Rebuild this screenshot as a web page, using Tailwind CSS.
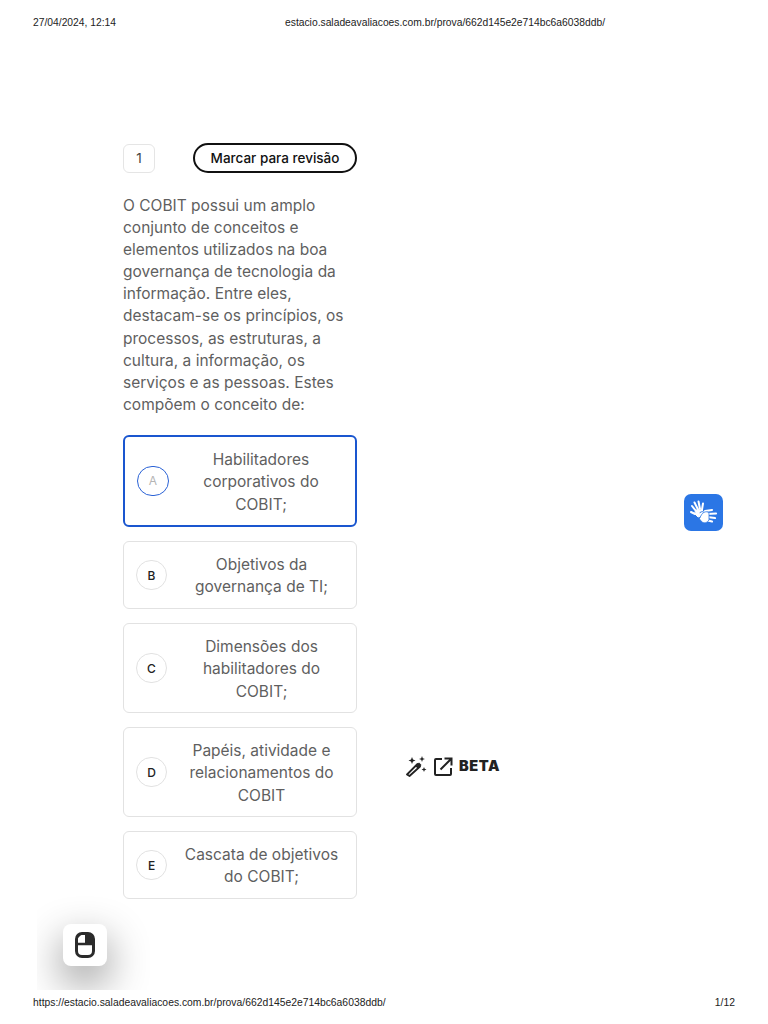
<!DOCTYPE html>
<html lang="en">
<head>
  <meta charset="UTF-8">
  <title>Prova</title>
  <script src="https://cdn.jsdelivr.net/npm/@tailwindcss/browser@4"></script>
</head>
<body class="bg-white">
  <div class="relative w-[768px] h-[1024px] overflow-hidden flex flex-col">
    <!-- print header -->
    <div class="flex pl-[33px] pt-[17px] h-[143px] text-[10.3px] leading-[12px] text-[#222] font-['Liberation_Sans',sans-serif]">
      <span class="w-[252px]">27/04/2024, 12:14</span>
      <span>estacio.saladeavaliacoes.com.br/prova/662d145e2e714bc6a6038ddb/</span>
    </div>

    <div class="ml-[123px] w-[234px] font-['Inter',sans-serif]">
      <div class="flex justify-between items-center h-[30px]">
        <div class="w-[32px] h-[29px] rounded-[6px] border border-[#e5e5e5] flex items-center justify-center text-[13.5px] text-[#444]">1</div>
        <div class="w-[164px] h-[30px] rounded-[15px] border-2 border-[#111] flex items-center justify-center text-[13.5px] font-medium text-[#111]">Marcar para revisão</div>
      </div>

      <p class="mt-[22px] text-[15.5px] leading-[22.1px] text-[#5f5f5f]">O COBIT possui um amplo conjunto de conceitos e elementos utilizados na boa governança de tecnologia da informação. Entre eles, destacam-se os princípios, os processos, as estruturas, a cultura, a informação, os serviços e as pessoas. Estes compõem o conceito de:</p>

      <div class="mt-[19px] flex flex-col gap-[14px]">
        <div class="h-[92px] rounded-[6px] border-2 border-[#1a56cf] flex items-center pl-[12px] pr-[2px]">
          <div class="w-[32px] h-[30px] shrink-0 rounded-full border border-[#2a62d6] flex items-center justify-center pt-[1px] text-[12px] text-[#b5b5b5]">A</div>
          <div class="flex-1 pt-[3px] text-center text-[15.5px] leading-[22.3px] text-[#5f5f5f]">Habilitadores<br>corporativos do<br>COBIT;</div>
        </div>
        <div class="h-[68px] rounded-[6px] border border-[#e2e2e2] flex items-center pl-[12px]">
          <div class="w-[31px] h-[30px] shrink-0 rounded-full border border-[#e2e2e2] flex items-center justify-center pt-[2px] text-[12px] font-medium text-[#222]">B</div>
          <div class="flex-1 pt-[2px] text-center text-[15.5px] leading-[22.3px] text-[#5f5f5f]">Objetivos da<br>governança de TI;</div>
        </div>
        <div class="h-[90px] rounded-[6px] border border-[#e2e2e2] flex items-center pl-[12px]">
          <div class="w-[31px] h-[30px] shrink-0 rounded-full border border-[#e2e2e2] flex items-center justify-center pt-[2px] text-[12px] font-medium text-[#222]">C</div>
          <div class="flex-1 pt-[3px] text-center text-[15.5px] leading-[22.3px] text-[#5f5f5f]">Dimensões dos<br>habilitadores do<br>COBIT;</div>
        </div>
        <div class="h-[90px] rounded-[6px] border border-[#e2e2e2] flex items-center pl-[12px]">
          <div class="w-[31px] h-[30px] shrink-0 rounded-full border border-[#e2e2e2] flex items-center justify-center pt-[2px] text-[12px] font-medium text-[#222]">D</div>
          <div class="flex-1 pt-[3px] text-center text-[15.5px] leading-[22.3px] text-[#5f5f5f]">Papéis, atividade e<br>relacionamentos do<br>COBIT</div>
        </div>
        <div class="h-[68px] rounded-[6px] border border-[#e2e2e2] flex items-center pl-[12px]">
          <div class="w-[31px] h-[30px] shrink-0 rounded-full border border-[#e2e2e2] flex items-center justify-center pt-[2px] text-[12px] font-medium text-[#222]">E</div>
          <div class="flex-1 pt-[3px] text-center text-[15.5px] leading-[22.3px] text-[#5f5f5f]">Cascata de objetivos<br>do COBIT;</div>
        </div>
      </div>
    </div>

    <!-- print footer -->
    <div class="absolute left-[33px] right-[33px] top-[997px] flex justify-between text-[10.35px] leading-[12px] text-[#222] font-['Liberation_Sans',sans-serif]">
      <span>https://estacio.saladeavaliacoes.com.br/prova/662d145e2e714bc6a6038ddb/</span>
      <span>1/12</span>
    </div>

    <!-- libras widget -->
    <div class="absolute left-[684px] top-[494px] w-[39px] h-[37px] rounded-[7px] bg-[#2b76e5] flex items-center justify-center">
      <svg width="30" height="27" viewBox="0 0 30 27" fill="none" stroke-linecap="round" stroke-linejoin="round">
        <path d="M3 7 L7 12 M5.5 3.5 L9 10.5 M9.5 2.5 L11 10 M14 4.5 L13 10.5 M2 13 L6 15" stroke="white" stroke-width="2"/>
        <path d="M7 11 H13 L15 13 L13 17 L9 18 L6 15 Z" fill="white" stroke="white"/>
        <path d="M11 13.5 C13 12 15 12.5 15.5 14" stroke="#2b76e5" stroke-width="1"/>
        <path d="M16 12 L23 11 M18 15 L27 14.5 M18 18 L26 19 M17 21 L23 22.5" stroke="white" stroke-width="2.2"/>
        <path d="M13 15 C15 12 20 12 20 15 V21 C18 24 15 24.5 13 23 L10.5 20 Z" fill="white" stroke="#2b76e5" stroke-width="0.8"/>
      </svg>
    </div>

    <!-- beta tools -->
    <div class="absolute left-[405px] top-[756px] h-[21px] flex items-center gap-[7px]">
      <svg width="22" height="21" viewBox="0 0 22 21" fill="none" stroke="#222">
        <path d="M2 18.5 L12.5 8 L15 10.5 L4.5 20 Z" stroke-width="1.8" stroke-linejoin="round"/>
        <path d="M11 9.5 L13.5 12" stroke-width="1.8"/>
        <path d="M11.5 9 L14 6.5 L16.5 9 L14 11.5 Z" fill="#222" stroke="none"/>
        <path d="M7 1 L8 3.5 L10.5 4.5 L8 5.5 L7 8 L6 5.5 L3.5 4.5 L6 3.5 Z M17 0 L17.8 2.2 L20 3 L17.8 3.8 L17 6 L16.2 3.8 L14 3 L16.2 2.2 Z M19 11 L19.7 12.8 L21.5 13.5 L19.7 14.2 L19 16 L18.3 14.2 L16.5 13.5 L18.3 12.8 Z" fill="#222" stroke="none"/>
      </svg>
      <svg width="19" height="19" viewBox="0 0 19 19" fill="none" stroke="#222" stroke-width="2">
        <path d="M8 2 H2 A1 1 0 0 0 1 3 V17 A1 1 0 0 0 2 18 H16 A1 1 0 0 0 17 17 V11"/>
        <path d="M6.5 12.5 L17 2 M10.5 1.5 H17.5 V8.5"/>
      </svg>
      <span class="ml-[-1px] text-[14.5px] leading-none font-black tracking-[0.6px] text-[#222] font-['Inter',sans-serif]">BETA</span>
    </div>

    <!-- mouse button -->
    <div class="absolute left-[37px] top-[880px] w-[150px] h-[110px] overflow-hidden">
      <div class="absolute left-[26px] top-[44px] w-[44px] h-[42px] rounded-[8px] bg-white shadow-[0_16px_42px_rgba(0,0,0,0.45)] flex items-center justify-center">
        <svg width="20" height="26" viewBox="0 0 20 26" fill="none">
          <rect x="1.5" y="1.5" width="17" height="23" rx="5.5" stroke="#2b2b2b" stroke-width="3"/>
          <path d="M10 2 H13 A5.5 5.5 0 0 1 18 8 V12 H10 Z" fill="#2b2b2b"/>
          <path d="M2 12 H18" stroke="#2b2b2b" stroke-width="2.5"/>
          <path d="M2 7 L7 2 L2 2 Z" fill="#2b2b2b"/>
        </svg>
      </div>
    </div>
  </div>
</body>
</html>
